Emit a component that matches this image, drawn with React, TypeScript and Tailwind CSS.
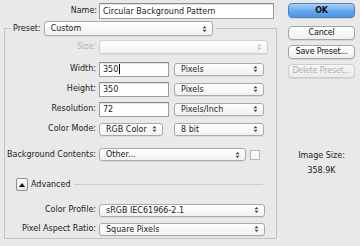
import React from 'react';

function Arrows() {
  return (
    <svg width="5" height="8" viewBox="0 0 5 8" className="shrink-0">
      <path d="M0.5 3.3 L2.5 1 L4.5 3.3Z M0.5 4.7 L2.5 7 L4.5 4.7Z" fill="#444" />
    </svg>
  );
}

function Select({ value, className, disabled }: { value: string; className: string; disabled?: boolean }) {
  return (
    <div
      className={`flex items-center justify-between rounded-[3px] border border-[#a9a9a9] bg-gradient-to-b from-white to-[#f1f1f1] pl-[6px] pr-[5px] shadow-[0_1px_0_rgba(0,0,0,0.06)] ${className} ${
        disabled ? 'border-[#cfcfcf] from-[#f3f3f3] to-[#ececec]' : ''
      }`}
    >
      <span className="overflow-hidden whitespace-nowrap leading-[11px]">{value}</span>
      {disabled ? <span className="opacity-30"><Arrows /></span> : <Arrows />}
    </div>
  );
}

function Input({ value, className, caret }: { value: string; className: string; caret?: boolean }) {
  return (
    <div
      className={`flex items-center border border-[#9c9c9c] border-t-[#8a8a8a] bg-white pl-[3px] shadow-[inset_0_1px_1px_rgba(0,0,0,0.12)] ${className}`}
    >
      <span className="leading-[11px]">{value}</span>
      {caret && <span className="ml-px h-[10px] w-px bg-black" />}
    </div>
  );
}

function Label({ children, disabled }: { children: React.ReactNode; disabled?: boolean }) {
  return (
    <div className={`w-[94px] shrink-0 pr-[3px] text-right ${disabled ? 'text-[#b4b4b4]' : 'text-[#222]'}`}>
      {children}
    </div>
  );
}

function Button({ children, primary, disabled, className }: { children: React.ReactNode; primary?: boolean; disabled?: boolean; className: string }) {
  const look = primary
    ? 'border-[#4f7fbf] bg-gradient-to-b from-[#a9d0f7] via-[#6aabef] to-[#4a94e6] font-bold text-[#111]'
    : disabled
      ? 'border-[#cdcdcd] bg-gradient-to-b from-[#f6f6f6] to-[#ececec] text-[#b0b0b0]'
      : 'border-[#a4a4a4] bg-gradient-to-b from-white to-[#efefef] text-[#111]';
  return (
    <div className={`flex items-center justify-center whitespace-nowrap rounded-[4px] border tracking-[-0.2px] shadow-[0_1px_0_rgba(0,0,0,0.08)] ${look} ${className}`}>
      {children}
    </div>
  );
}

export default function App() {
  return (
    <div className="flex h-[246px] w-[360px] bg-[#e9e9e9] font-['Lucida_Grande','DejaVu_Sans',sans-serif] text-[8px] text-[#222]">
      <div className="w-[288px] pl-[4px] pt-[3px]">
        <div className="flex h-[16px] items-center">
          <div className="w-[95px] pr-[2px] text-right">Name:</div>
          <Input value="Circular Background Pattern" className="h-[16px] w-[175px]" />
        </div>

        <fieldset className="mt-[2px] w-[273px] border border-[#c4c4c4] pb-[3px]">
          <legend className="ml-[6px] flex h-[15px] items-center pl-[2px] pr-[3px]">
            <span>Preset:</span>
            <Select value="Custom" className="ml-[3px] h-[15px] w-[169px]" />
          </legend>

          <div className="mt-[4px] flex h-[14px] items-center">
            <Label disabled>Size:</Label>
            <Select value="" disabled className="h-[14px] w-[169px]" />
          </div>

          <div className="mt-[8px] flex h-[14px] items-center">
            <Label>Width:</Label>
            <Input value="350" caret className="h-[15px] w-[70px]" />
            <Select value="Pixels" className="ml-[5px] h-[13px] w-[90px]" />
          </div>

          <div className="mt-[6px] flex h-[14px] items-center">
            <Label>Height:</Label>
            <Input value="350" className="h-[15px] w-[70px]" />
            <Select value="Pixels" className="ml-[5px] h-[13px] w-[90px]" />
          </div>

          <div className="mt-[6px] flex h-[14px] items-center">
            <Label>Resolution:</Label>
            <Input value="72" className="h-[15px] w-[70px]" />
            <Select value="Pixels/Inch" className="ml-[5px] h-[13px] w-[90px]" />
          </div>

          <div className="mt-[6px] flex h-[14px] items-center">
            <Label>Color Mode:</Label>
            <Select value="RGB Color" className="h-[13px] w-[64px]" />
            <Select value="8 bit" className="ml-[11px] h-[13px] w-[90px]" />
          </div>

          <div className="mt-[12px] flex h-[13px] items-center">
            <Label>Background Contents:</Label>
            <Select value="Other..." className="h-[13px] w-[147px]" />
            <div className="ml-[4px] h-[10px] w-[10px] border border-[#b9b9b9] bg-[#f7f7f7]" />
          </div>

          <div className="mt-[17px] flex h-[13px] items-center">
            <div className="ml-[11px] flex h-[13px] w-[12px] items-center justify-center rounded-[2px] border border-[#8e8e8e] bg-gradient-to-b from-white to-[#e6e6e6]">
              <svg width="6" height="4" viewBox="0 0 6 4">
                <path d="M0 4 L3 0 L6 4Z" fill="#111" />
              </svg>
            </div>
            <span className="ml-[3px]">Advanced</span>
            <div className="ml-[3px] mr-[13px] h-px flex-1 bg-[#cbcbcb]" />
          </div>

          <div className="mt-[13px] flex h-[12px] items-center">
            <Label>Color Profile:</Label>
            <Select value="sRGB IEC61966-2.1" className="h-[13px] w-[166px]" />
          </div>

          <div className="mt-[7px] flex h-[12px] items-center">
            <Label>Pixel Aspect Ratio:</Label>
            <Select value="Square Pixels" className="h-[13px] w-[166px]" />
          </div>
        </fieldset>
      </div>

      <div className="flex w-[67px] flex-col pt-[3px]">
        <Button primary className="h-[15px]">OK</Button>
        <Button className="mt-[8px] h-[14px]">Cancel</Button>
        <Button className="mt-[5px] h-[14px]">Save Preset...</Button>
        <Button disabled className="mt-[5px] h-[14px]">Delete Preset...</Button>
        <div className="mt-[73px] text-center leading-[10px]">Image Size:</div>
        <div className="mt-[5px] text-center leading-[10px]">358.9K</div>
      </div>
    </div>
  );
}
